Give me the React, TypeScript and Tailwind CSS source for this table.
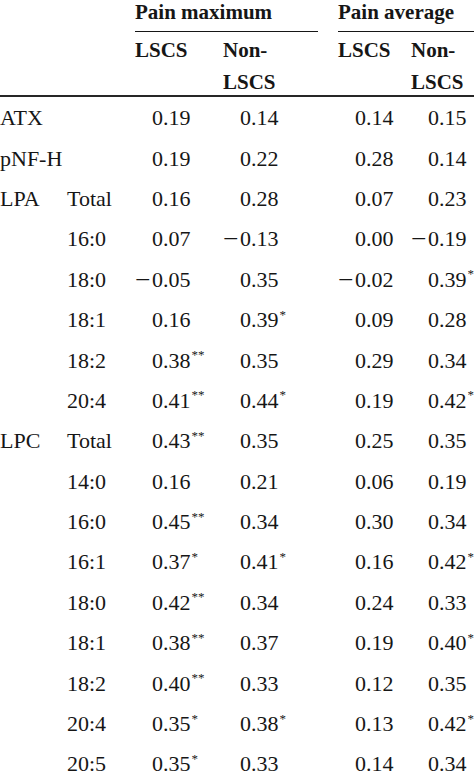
import React from "react";

const rows: { a: string; b: string; c: string[] }[] = [
  { a: "ATX", b: "", c: ["0.19", "0.14", "0.14", "0.15"] },
  { a: "pNF-H", b: "", c: ["0.19", "0.22", "0.28", "0.14"] },
  { a: "LPA", b: "Total", c: ["0.16", "0.28", "0.07", "0.23"] },
  { a: "", b: "16:0", c: ["0.07", "−0.13", "0.00", "−0.19"] },
  { a: "", b: "18:0", c: ["−0.05", "0.35", "−0.02", "0.39*"] },
  { a: "", b: "18:1", c: ["0.16", "0.39*", "0.09", "0.28"] },
  { a: "", b: "18:2", c: ["0.38**", "0.35", "0.29", "0.34"] },
  { a: "", b: "20:4", c: ["0.41**", "0.44*", "0.19", "0.42*"] },
  { a: "LPC", b: "Total", c: ["0.43**", "0.35", "0.25", "0.35"] },
  { a: "", b: "14:0", c: ["0.16", "0.21", "0.06", "0.19"] },
  { a: "", b: "16:0", c: ["0.45**", "0.34", "0.30", "0.34"] },
  { a: "", b: "16:1", c: ["0.37*", "0.41*", "0.16", "0.42*"] },
  { a: "", b: "18:0", c: ["0.42**", "0.34", "0.24", "0.33"] },
  { a: "", b: "18:1", c: ["0.38**", "0.37", "0.19", "0.40*"] },
  { a: "", b: "18:2", c: ["0.40**", "0.33", "0.12", "0.35"] },
  { a: "", b: "20:4", c: ["0.35*", "0.38*", "0.13", "0.42*"] },
  { a: "", b: "20:5", c: ["0.35*", "0.33", "0.14", "0.34"] },
];

function parse(raw: string): { neg: boolean; num: string; star: string } {
  const neg = raw.startsWith("−");
  const body = neg ? raw.slice(1) : raw;
  const m = body.match(/^([0-9.]+)(\**)$/);
  return { neg, num: m ? m[1] : body, star: m ? m[2] : "" };
}

function Num({ raw }: { raw: string }) {
  const { neg, num, star } = parse(raw);
  return (
    <div className="flex items-center whitespace-nowrap">
      <span className="inline-flex w-[17px] justify-end pr-[2px]">
        {neg ? <span className="inline-block scale-x-[1.25] origin-right">−</span> : ""}
      </span>
      <span>{num}</span>
      {star && (
        <span className="relative top-[-6px] ml-[1px] text-[13px] leading-none">{star}</span>
      )}
    </div>
  );
}

const cols = "grid grid-cols-[67px_68px_88px_114px_74px_1fr]";

export default function App() {
  return (
    <div
      className="w-[474px] h-[783px] overflow-hidden bg-white text-[#161616] text-[21px]"
      style={{ fontFamily: '"Liberation Serif", "Times New Roman", serif' }}
    >
      {/* Header */}
      <div className={cols}>
        <div className="col-span-2" />
        <div className="col-span-2 flex flex-col">
          <div className="h-[31px] leading-[25px] font-bold">Pain maximum</div>
          <div className="w-[183px] border-b-[1.5px] border-[#161616]" />
        </div>
        <div className="col-span-2 flex flex-col pl-[1px]">
          <div className="h-[31px] leading-[25px] font-bold">Pain average</div>
          <div className="w-[136px] border-b-[1.5px] border-[#161616]" />
        </div>
      </div>
      <div className={cols + " border-b-2 border-[#262626] pt-[1.5px] h-[65px] font-bold leading-[32px]"}>
        <div className="col-span-2" />
        <div>LSCS</div>
        <div>
          Non-
          <br />
          LSCS
        </div>
        <div className="pl-[1px]">LSCS</div>
        <div>
          Non-
          <br />
          LSCS
        </div>
      </div>
      {/* Body */}
      <div className={cols + " auto-rows-[40.4px] pt-[1px] leading-none text-[22px]"}>
        {rows.map((r, i) => (
          <React.Fragment key={i}>
            <div className="flex items-center whitespace-nowrap">{r.a}</div>
            <div className="flex items-center whitespace-nowrap">{r.b}</div>
            {r.c.map((v, j) => (
              <div key={j} className={j === 2 ? "flex items-center pl-[1px]" : "flex items-center"}>
                <Num raw={v} />
              </div>
            ))}
          </React.Fragment>
        ))}
      </div>
    </div>
  );
}
